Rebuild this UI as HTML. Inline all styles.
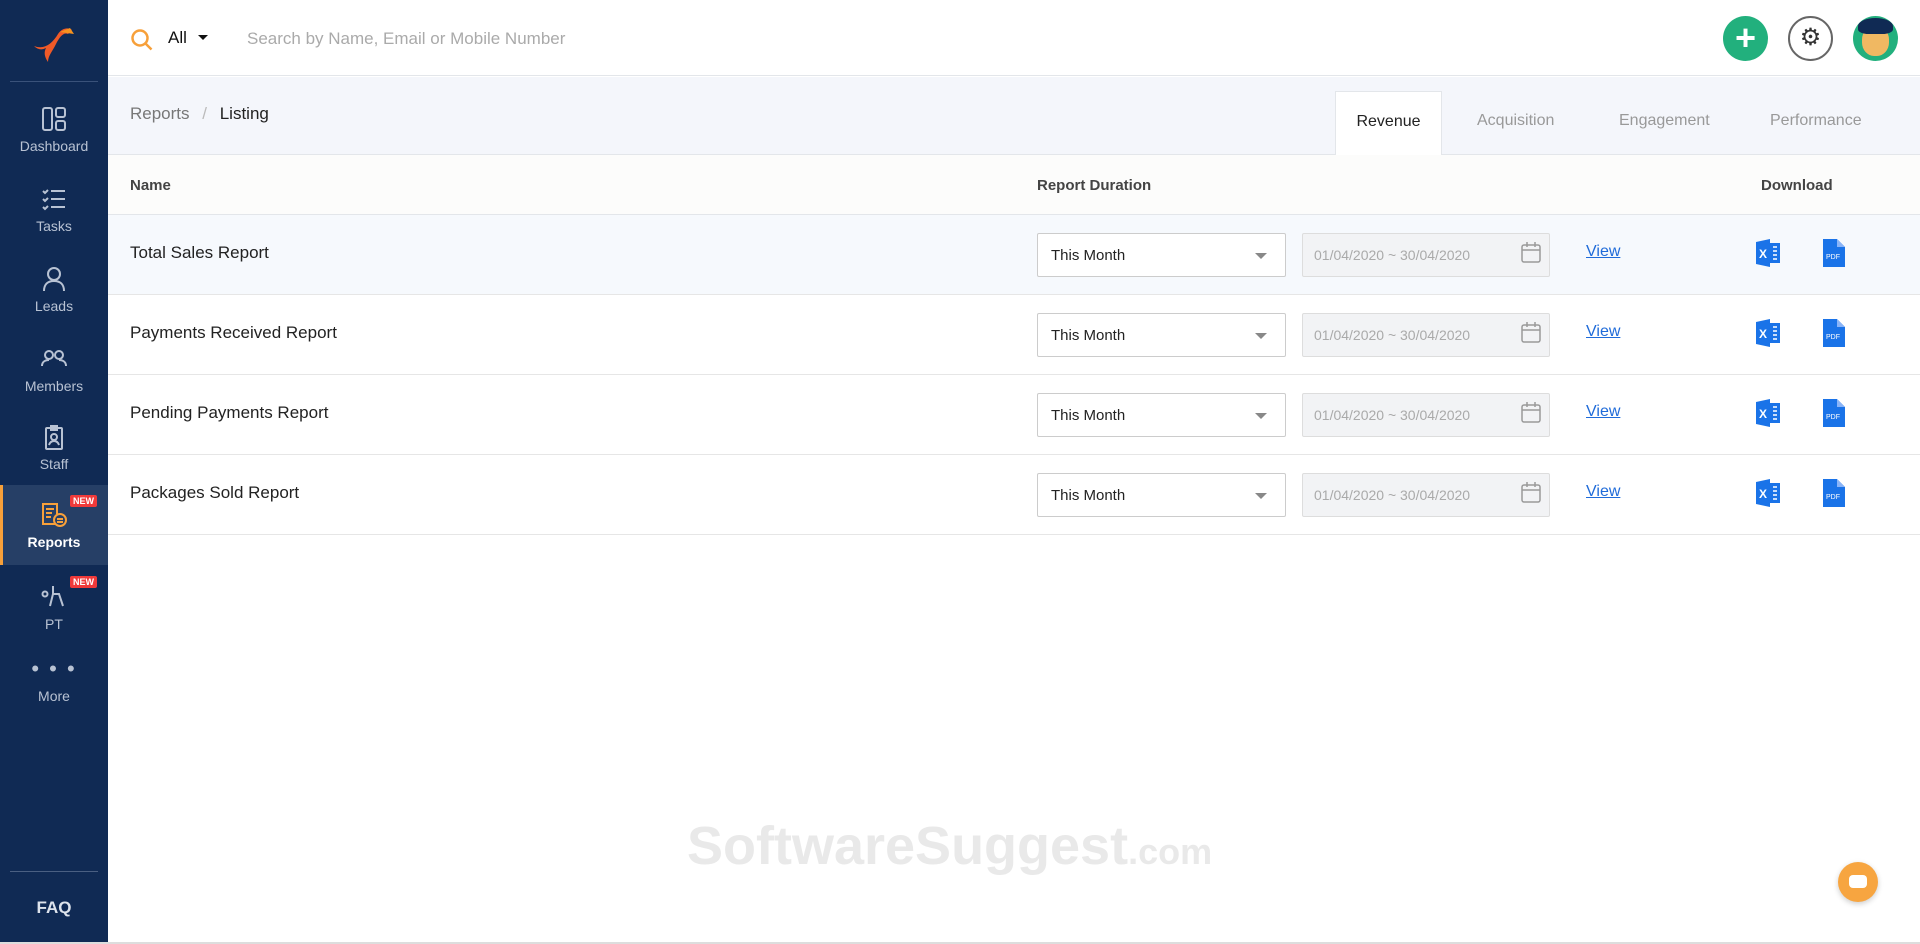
<!DOCTYPE html>
<html><head><meta charset="utf-8"><style>
*{box-sizing:border-box;margin:0;padding:0}
body{width:1920px;height:944px;overflow:hidden;font-family:"Liberation Sans",sans-serif;background:#fff;position:relative;color:#222}
.sb{position:absolute;left:0;top:0;width:108px;height:942px;background:#102a54}
.it{position:absolute;left:0;width:108px;text-align:center;color:#b8c2d3;font-size:14px}
.it svg{display:block;margin:0 auto 6px}
.new{position:absolute;left:70px;background:#f03a3a;color:#fff;font-size:9px;font-weight:bold;padding:1px 3px;border-radius:2px}
.hd{position:absolute;left:108px;top:0;right:0;height:76px;border-bottom:1px solid #e3e6ea;background:#fff}
.bc{position:absolute;left:108px;top:77px;right:0;height:78px;background:#f4f6fb;border-bottom:1px solid #e3e6ea}
.th{position:absolute;left:108px;top:155px;right:0;height:60px;background:#fcfcfb;border-bottom:1px solid #e3e6ea;font-size:15px;font-weight:bold;color:#444}
.row{position:absolute;left:108px;right:0;height:80px;border-bottom:1px solid #e6e6e6;font-size:17px}
.sel{position:absolute;left:929px;top:18px;width:249px;height:44px;border:1px solid #ccc;border-radius:2px;background:#fff;font-size:15px;padding:13px 13px}
.sel:after{content:"";position:absolute;right:18px;top:19px;border:6px solid transparent;border-top:6px solid #888}
.dt{position:absolute;left:1194px;top:18px;width:248px;height:44px;border:1px solid #ddd;border-radius:2px;background:#f2f3f5;color:#aaa;font-size:14px;padding:13px 11px}
.view{position:absolute;left:1478px;top:28px;color:#1f6bd9;text-decoration:underline;font-size:16px}
.tab{position:absolute;top:91px;height:64px;font-size:16px;color:#999;padding-top:21px}
</style></head><body>
<div class="sb">
<svg style="position:absolute;left:30px;top:24px" width="48" height="40" viewBox="0 0 48 40"><path d="M4 22 C14 26 22 20 28 10 C32 4 38 3 42 6 L38 10 C34 8 30 12 26 20 C22 28 18 32 18 38 C14 32 14 28 16 24 C12 26 8 26 4 22Z" fill="#f05a28"/><path d="M30 8 L40 4 L44 10 Z" fill="#f7931e"/></svg>
<div style="position:absolute;left:10px;top:81px;width:88px;height:1px;background:#3a527a"></div>
<div class="it" style="top:106px"><svg width="26" height="26" viewBox="0 0 26 26" fill="none" stroke="#b8c2d3" stroke-width="2"><rect x="2" y="2" width="9" height="22" rx="2"/><rect x="15" y="2" width="9" height="9" rx="2"/><rect x="15" y="15" width="9" height="9" rx="2"/></svg>Dashboard</div>
<div class="it" style="top:186px"><svg width="26" height="26" viewBox="0 0 26 26" fill="none" stroke="#b8c2d3" stroke-width="2"><path d="M10 5h14M10 13h14M10 21h14M2 5l2 2 3-3M2 13l2 2 3-3M2 21l2 2 3-3"/></svg>Tasks</div>
<div class="it" style="top:266px"><svg width="26" height="26" viewBox="0 0 26 26" fill="none" stroke="#b8c2d3" stroke-width="2"><circle cx="13" cy="8" r="6"/><path d="M3 25c0-7 4-10 10-10s10 3 10 10"/></svg>Leads</div>
<div class="it" style="top:346px"><svg width="26" height="26" viewBox="0 0 26 26" fill="none" stroke="#b8c2d3" stroke-width="2"><circle cx="8" cy="9" r="4"/><circle cx="18" cy="9" r="4"/><path d="M1 20c0-4 3-6 7-6M25 20c0-4-3-6-7-6"/></svg>Members</div>
<div class="it" style="top:424px"><svg width="26" height="26" viewBox="0 0 26 26" fill="none" stroke="#b8c2d3" stroke-width="2"><rect x="5" y="4" width="16" height="21" rx="1"/><path d="M10 2h6v4h-6z"/><circle cx="13" cy="13" r="3"/><path d="M8 21c1-3 3-4 5-4s4 1 5 4"/></svg>Staff</div>
<div style="position:absolute;left:0;top:485px;width:108px;height:80px;background:#263f66;border-left:3px solid #f7a03a"></div>
<div class="it" style="top:502px;color:#fff;font-weight:bold"><svg width="28" height="26" viewBox="0 0 28 26" fill="none" stroke="#f7a03a" stroke-width="2"><path d="M16 22H3V2h14v10"/><path d="M6 7h8M6 11h6M6 15h5"/><circle cx="20" cy="18" r="6"/><path d="M17 17h6M17 20h6"/></svg>Reports</div>
<div class="new" style="top:495px">NEW</div>
<div class="it" style="top:584px"><svg width="26" height="26" viewBox="0 0 26 26" fill="none" stroke="#b8c2d3" stroke-width="2"><circle cx="4" cy="10" r="2.5"/><path d="M12 2v8h6l4 12M12 10l-3 12"/></svg>PT</div>
<div class="new" style="top:576px">NEW</div>
<div class="it" style="top:664px"><div style="height:24px;font-size:22px;line-height:10px;letter-spacing:2px">• • •</div>More</div>
<div style="position:absolute;left:10px;top:871px;width:88px;height:1px;background:#4a5f82"></div>
<div class="it" style="top:898px;color:#dde3ec;font-weight:bold;font-size:17px">FAQ</div>
</div>
<div class="hd">
<svg style="position:absolute;left:22px;top:28px" width="24" height="24" viewBox="0 0 24 24" fill="none" stroke="#f7a03a" stroke-width="2.5"><circle cx="10" cy="10" r="7.5"/><path d="M15.5 15.5l6 6"/></svg>
<div style="position:absolute;left:60px;top:28px;font-size:17px;color:#111">All <span style="display:inline-block;border:5px solid transparent;border-top:5px solid #111;vertical-align:-2px;margin-left:6px"></span></div>
<div style="position:absolute;left:139px;top:29px;font-size:17px;color:#aaa">Search by Name, Email or Mobile Number</div>
<div style="position:absolute;left:1615px;top:16px;width:45px;height:45px;border-radius:50%;background:#22b07d;color:#fff;font-size:36px;line-height:43px;text-align:center;font-weight:bold">+</div>
<div style="position:absolute;left:1680px;top:16px;width:45px;height:45px;border-radius:50%;border:2px solid #666;text-align:center;line-height:40px;font-size:24px;color:#333">⚙</div>
<div style="position:absolute;left:1745px;top:16px;width:45px;height:45px;border-radius:50%;background:#22b07d;overflow:hidden"><div style="position:absolute;left:9px;top:10px;width:27px;height:30px;border-radius:45%;background:#f0b862"></div><div style="position:absolute;left:5px;top:2px;width:35px;height:16px;border-radius:50% 50% 30% 30%;background:#102a54"></div></div>
</div>
<div class="bc">
<div style="position:absolute;left:22px;top:27px;font-size:17px;color:#777">Reports <span style="color:#bbb;margin:0 8px">/</span> <span style="color:#222">Listing</span></div>
<div class="tab" style="left:1227px;width:107px;background:#fff;border:1px solid #e3e6ea;border-bottom:none;color:#222;text-align:center;top:14px">Revenue</div>
<div class="tab" style="left:1369px;top:14px">Acquisition</div>
<div class="tab" style="left:1511px;top:14px">Engagement</div>
<div class="tab" style="left:1662px;top:14px">Performance</div>
</div>
<div class="th"><span style="position:absolute;left:22px;top:22px">Name</span><span style="position:absolute;left:929px;top:22px">Report Duration</span><span style="position:absolute;left:1653px;top:22px">Download</span></div>
<div class="row" style="top:215px;background:#f6f9fd"><span style="position:absolute;left:22px;top:28px">Total Sales Report</span><div class="sel">This Month</div><div class="dt">01/04/2020 ~ 30/04/2020</div><div class="view">View</div></div>
<div class="row" style="top:295px"><span style="position:absolute;left:22px;top:28px">Payments Received Report</span><div class="sel">This Month</div><div class="dt">01/04/2020 ~ 30/04/2020</div><div class="view">View</div></div>
<div class="row" style="top:375px"><span style="position:absolute;left:22px;top:28px">Pending Payments Report</span><div class="sel">This Month</div><div class="dt">01/04/2020 ~ 30/04/2020</div><div class="view">View</div></div>
<div class="row" style="top:455px"><span style="position:absolute;left:22px;top:28px">Packages Sold Report</span><div class="sel">This Month</div><div class="dt">01/04/2020 ~ 30/04/2020</div><div class="view">View</div></div>
<svg width="0" height="0" style="position:absolute"><defs>
<g id="x"><path d="M0 3L14 0V28L0 25Z" fill="#1a73e8"/><rect x="14" y="4" width="10" height="20" fill="#1a73e8"/><text x="3" y="19" font-size="12" font-weight="bold" fill="#fff" font-family="Liberation Sans">X</text><path d="M17 8h4M17 12h4M17 16h4M17 20h4" stroke="#fff" stroke-width="1.5"/></g>
<g id="p"><path d="M0 0H14L22 8V28H0Z" fill="#1a73e8"/><path d="M14 0V8H22" fill="#8ab4f8"/><text x="3" y="20" font-size="7" fill="#fff" font-family="Liberation Sans">PDF</text></g>
<g id="c"><rect x="1" y="3" width="18" height="17" rx="2" fill="none" stroke="#999" stroke-width="1.5"/><path d="M1 8h18M6 0v5M14 0v5" stroke="#999" stroke-width="1.5"/></g>
</defs></svg>
<svg style="position:absolute;left:0;top:0" width="1920" height="944">
<g transform="translate(1756,239)"><use href="#x"/></g><g transform="translate(1823,239)"><use href="#p"/></g><g transform="translate(1521,242)"><use href="#c"/></g>
<g transform="translate(1756,319)"><use href="#x"/></g><g transform="translate(1823,319)"><use href="#p"/></g><g transform="translate(1521,322)"><use href="#c"/></g>
<g transform="translate(1756,399)"><use href="#x"/></g><g transform="translate(1823,399)"><use href="#p"/></g><g transform="translate(1521,402)"><use href="#c"/></g>
<g transform="translate(1756,479)"><use href="#x"/></g><g transform="translate(1823,479)"><use href="#p"/></g><g transform="translate(1521,482)"><use href="#c"/></g>
</svg>
<div style="position:absolute;left:687px;top:815px;font-size:54px;font-weight:bold;color:#e9e9e9">SoftwareSuggest<span style="font-size:36px">.com</span></div>
<div style="position:absolute;left:1838px;top:862px;width:40px;height:40px;border-radius:50%;background:#f7a540;box-shadow:0 2px 6px rgba(0,0,0,.2)"><div style="position:absolute;left:11px;top:13px;width:18px;height:13px;border-radius:4px;background:#fff"></div></div>
<div style="position:absolute;left:0;top:942px;width:1920px;height:2px;background:#ddd"></div>
</body></html>
